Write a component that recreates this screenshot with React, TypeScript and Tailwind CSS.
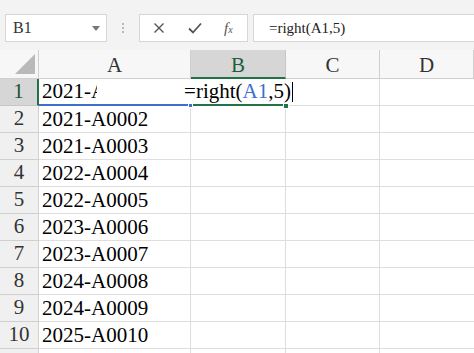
import React from "react";

const serif = "font-['Liberation_Serif','Times_New_Roman','DejaVu_Serif',serif]";

const rows = [
  "2021-A0001",
  "2021-A0002",
  "2021-A0003",
  "2022-A0004",
  "2022-A0005",
  "2023-A0006",
  "2023-A0007",
  "2024-A0008",
  "2024-A0009",
  "2025-A0010",
  "",
];

const cols = ["A", "B", "C", "D"];

function Toolbar() {
  return (
    <div className="h-[50px] bg-[#f3f3f3] flex items-start pt-[14px] pl-[5px] font-['Liberation_Serif','Times_New_Roman','DejaVu_Serif',serif]">
      <div className="w-[102px] h-[28px] bg-white border border-[#d6d6d6] flex items-center justify-between pl-[7px] pr-[6px]">
        <span className="text-[16px] text-[#333] leading-none">B1</span>
        <svg width="8" height="5" viewBox="0 0 8 5">
          <path d="M0 0h8L4 5z" fill="#777" />
        </svg>
      </div>
      <div className="w-[32px] h-[28px] flex flex-col items-center justify-center gap-[2px]">
        <span className="w-[2px] h-[2px] bg-[#b8b8b8]" />
        <span className="w-[2px] h-[2px] bg-[#b8b8b8]" />
        <span className="w-[2px] h-[2px] bg-[#b8b8b8]" />
      </div>
      <div className="w-[109px] h-[28px] bg-white border border-[#d6d6d6] flex items-center">
        <svg width="12" height="12" viewBox="0 0 12 12" className="ml-[13px]">
          <path d="M1.5 1.5l9 9M10.5 1.5l-9 9" stroke="#555" strokeWidth="1.4" />
        </svg>
        <svg width="14" height="12" viewBox="0 0 14 12" className="ml-[23px]">
          <path d="M1 6.5l4 4L13 1.5" stroke="#555" strokeWidth="1.8" fill="none" />
        </svg>
        <span className="ml-[22px] text-[15px] italic text-[#555] leading-none">
          f<span className="text-[10px]">x</span>
        </span>
      </div>
      <div className="ml-[5px] flex-1 h-[28px] bg-white border border-[#d6d6d6] border-r-0 flex items-center pl-[15px]">
        <span className="text-[15px] text-[#222] leading-none">=right(A1,5)</span>
      </div>
    </div>
  );
}

function Sheet() {
  return (
    <div className={"relative grid grid-cols-[39px_152px_95px_94px_1fr] " + "font-['Liberation_Serif','Times_New_Roman','DejaVu_Serif',serif]"}>
      <div className="h-[29px] bg-[#f7f7f7] border-r border-b border-[#cfcfcf] flex items-end justify-end pr-[3px] pb-[4px]">
        <svg width="20" height="20" viewBox="0 0 20 20">
          <path d="M20 0V20H0z" fill="#b9b9b9" />
        </svg>
      </div>
      {cols.map((c) => (
        <div
          key={c}
          className={
            c === "B"
              ? "h-[29px] bg-[#d6d6d6] border-r border-[#c6c6c6] border-b-2 border-b-[#217346] flex items-center justify-center text-[21px] text-[#1e5e38] pt-[4px]"
              : "h-[29px] bg-[#f7f7f7] border-r border-b border-[#cfcfcf] flex items-center justify-center text-[21px] text-[#333] pt-[4px]"
          }
        >
          {c}
        </div>
      ))}
      {rows.map((v, i) => (
        <React.Fragment key={i}>
          <div
            className={
              i === 0
                ? "h-[27px] bg-[#d6d6d6] border-b border-[#c6c6c6] border-r-2 border-r-[#217346] flex items-center justify-center text-[21px] text-[#1e4e30]"
                : "h-[27px] bg-[#f0f0f0] border-r border-b border-[#d0d0d0] flex items-center justify-center text-[21px] text-[#333]"
            }
          >
            {i < 10 ? i + 1 : ""}
          </div>
          <div
            className={
              i === 0
                ? "h-[27px] border-r border-[#dadada] border-b-2 border-b-[#3c6fcf] flex items-center pl-[3px] text-[21px] text-black leading-none overflow-hidden whitespace-nowrap"
                : "h-[27px] border-r border-b border-[#dedede] flex items-center pl-[3px] text-[21px] text-black leading-none overflow-hidden whitespace-nowrap"
            }
          >
            {v}
          </div>
          <div
            className={
              i === 0
                ? "h-[27px] border-r border-[#dadada] border-b-2 border-b-[#217346]"
                : "h-[27px] border-r border-b border-[#dedede]"
            }
          />
          <div className="h-[27px] border-r border-b border-[#dedede]" />
          <div className="h-[27px] border-b border-[#dedede]" />
        </React.Fragment>
      ))}
      <div className="absolute left-[97px] top-[29px] w-[196px] h-[25px] bg-white flex items-center justify-end text-[21px] leading-none text-black whitespace-nowrap">
        <span>
          =right(<span className="text-[#3c6fcf]">A1</span>,5)
        </span>
        <span className="ml-[1px] w-[1px] h-[20px] bg-black" />
      </div>
      <div className="absolute left-[188px] top-[53px] w-[5px] h-[5px] bg-[#3c6fcf] border border-white" />
      <div className="absolute left-[283px] top-[53px] w-[6px] h-[6px] bg-[#217346] border border-white" />
    </div>
  );
}

export default function App() {
  return (
    <div className="w-[474px] h-[353px] overflow-hidden bg-white">
      <Toolbar />
      <Sheet />
    </div>
  );
}
